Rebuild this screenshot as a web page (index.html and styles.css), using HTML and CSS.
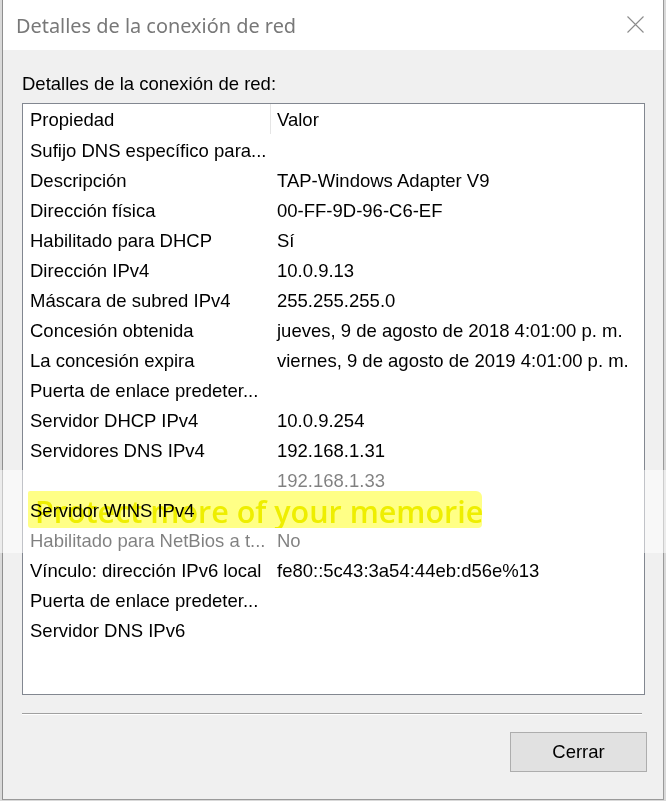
FILE: index.html
```html
<!DOCTYPE html>
<html lang="es">
<head>
<meta charset="utf-8">
<title>Detalles de la conexión de red</title>
<link rel="stylesheet" href="styles.css">
</head>
<body>
<div class="window">
  <div class="titlebar">
    <span class="title">Detalles de la conexión de red</span>
    <svg class="close" width="17" height="17" viewBox="0 0 17 17" aria-hidden="true">
      <path d="M0.5 0.5 L16.5 16.5 M16.5 0.5 L0.5 16.5" stroke="#8c8c8c" stroke-width="1.1" fill="none"/>
    </svg>
  </div>
  <div class="content">
    <div class="label">Detalles de la conexión de red:</div>
    <div class="listbox">
      <div class="row header">
        <div class="cell c1">Propiedad</div>
        <div class="cell c2">Valor</div>
      </div>
      <div class="row"><div class="cell c1">Sufijo DNS específico para...</div><div class="cell c2"></div></div>
      <div class="row"><div class="cell c1">Descripción</div><div class="cell c2">TAP-Windows Adapter V9</div></div>
      <div class="row"><div class="cell c1">Dirección física</div><div class="cell c2">00-FF-9D-96-C6-EF</div></div>
      <div class="row"><div class="cell c1">Habilitado para DHCP</div><div class="cell c2">Sí</div></div>
      <div class="row"><div class="cell c1">Dirección IPv4</div><div class="cell c2">10.0.9.13</div></div>
      <div class="row"><div class="cell c1">Máscara de subred IPv4</div><div class="cell c2">255.255.255.0</div></div>
      <div class="row"><div class="cell c1">Concesión obtenida</div><div class="cell c2">jueves, 9 de agosto de 2018 4:01:00 p. m.</div></div>
      <div class="row"><div class="cell c1">La concesión expira</div><div class="cell c2">viernes, 9 de agosto de 2019 4:01:00 p. m.</div></div>
      <div class="row"><div class="cell c1">Puerta de enlace predeter...</div><div class="cell c2"></div></div>
      <div class="row"><div class="cell c1">Servidor DHCP IPv4</div><div class="cell c2">10.0.9.254</div></div>
      <div class="row"><div class="cell c1">Servidores DNS IPv4</div><div class="cell c2">192.168.1.31</div></div>
      <div class="row"><div class="cell c1"></div><div class="cell c2">192.168.1.33</div></div>
      <div class="row lifted"><div class="cell c1">Servidor WINS IPv4</div><div class="cell c2"></div></div>
      <div class="row"><div class="cell c1">Habilitado para NetBios a t...</div><div class="cell c2">No</div></div>
      <div class="row"><div class="cell c1">Vínculo: dirección IPv6 local</div><div class="cell c2">fe80::5c43:3a54:44eb:d56e%13</div></div>
      <div class="row"><div class="cell c1">Puerta de enlace predeter...</div><div class="cell c2"></div></div>
      <div class="row"><div class="cell c1">Servidor DNS IPv6</div><div class="cell c2"></div></div>
    </div>
    <div class="separator"></div>
    <div class="buttons">
      <button class="btn" type="button">Cerrar</button>
    </div>
  </div>
</div>
<div class="wm-white"></div>
<div class="wm-yellow"><span>Protect more of your memories</span></div>
</body>
</html>
```

FILE: styles.css
```css
html, body {
  margin: 0;
  padding: 0;
}
body {
  width: 666px;
  height: 801px;
  background: #d9d9d9;
  overflow: hidden;
}
.window {
  box-sizing: border-box;
  width: 662px;
  height: 800px;
  margin-left: 2px;
  border-left: 1px solid #8f8f8f;
  border-right: 1px solid #9a9a9a;
  border-bottom: 1px solid #9a9a9a;
  background: #f0f0f0;
  display: flex;
  flex-direction: column;
}
.titlebar {
  height: 50px;
  background: #ffffff;
  display: flex;
  align-items: center;
  justify-content: space-between;
  padding: 0 19px 0 13px;
}
.title {
  font-family: "Noto Sans", "Open Sans", sans-serif;
  font-size: 19.9px;
  color: #787878;
  margin-top: 0;
}
.close {
  display: block;
  margin-top: -1px;
}
.content {
  flex: 1;
  display: flex;
  flex-direction: column;
  padding: 23px 18px 0 19px;
  font-family: "Liberation Sans", Arial, sans-serif;
  font-size: 18.5px;
  color: #000;
}
.label {
  line-height: 21px;
  height: 21px;
  margin-bottom: 9px;
}
.listbox {
  height: 590px;
  border: 1px solid #828790;
  background: #fff;
  display: flex;
  flex-direction: column;
}
.row {
  display: grid;
  grid-template-columns: 247px 1fr;
  height: 30px;
  line-height: 30px;
  white-space: nowrap;
}
.row.header {
  height: 32px;
  line-height: 31px;
}
.cell.c1 {
  padding-left: 7px;
}
.cell.c2 {
  padding-left: 7px;
}
.row.header .c2 {
  border-left: 1px solid #e5e5e5;
  padding-left: 6px;
  height: 30px;
}
.row.lifted {
  position: relative;
  z-index: 6;
}
.separator {
  margin-top: 18px;
  margin-right: 3px;
  height: 1px;
  background: #a0a0a0;
  border-bottom: 1px solid #ffffff;
}
.buttons {
  display: flex;
  justify-content: flex-end;
  margin-top: 17px;
  margin-right: -2px;
}
.btn {
  width: 137px;
  height: 40px;
  box-sizing: border-box;
  border: 1px solid #adadad;
  background: #e1e1e1;
  font-family: "Liberation Sans", Arial, sans-serif;
  font-size: 18.5px;
  color: #000;
  padding: 0;
}
.wm-white {
  position: absolute;
  left: 0;
  top: 470px;
  width: 666px;
  height: 83px;
  background: rgba(255, 255, 255, 0.5);
  z-index: 5;
}
.wm-yellow {
  position: absolute;
  left: 28px;
  top: 491px;
  width: 454px;
  height: 37px;
  background: #ffff86;
  mix-blend-mode: multiply;
  z-index: 7;
  overflow: hidden;
  white-space: nowrap;
  box-sizing: border-box;
  padding-left: 7px;
  border-radius: 2px 6px 4px 3px;
}
.wm-yellow span {
  font-family: "Open Sans", "Noto Sans", sans-serif;
  font-weight: 600;
  font-size: 30.5px;
  line-height: 40px;
  color: #eeee00;
}
```
